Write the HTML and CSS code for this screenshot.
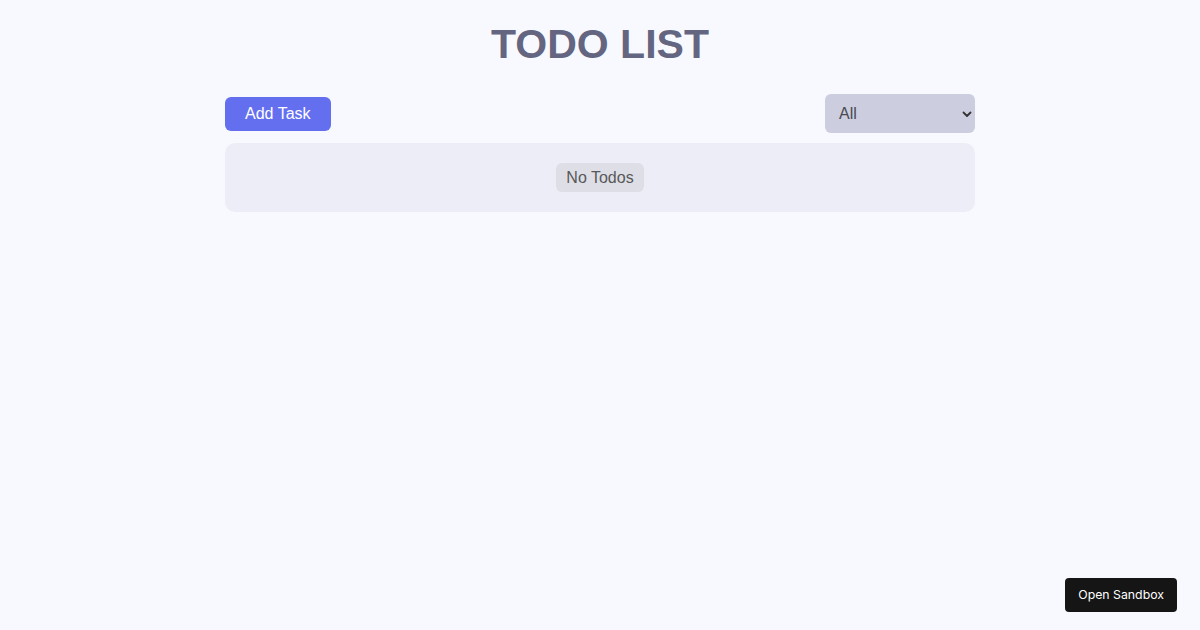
FILE: index.html
```html
<!DOCTYPE html>
<html>
<head>
<meta charset="utf-8">
<link rel="stylesheet" href="styles.css">
</head>
<body>
<div class="app">
  <h1 class="title">TODO LIST</h1>
  <div class="toolbar">
    <button class="add-btn">Add Task</button>
    <div class="select-wrap">
      <span class="select-value">All</span>
      <svg class="chevron" width="10" height="7" viewBox="0 0 10 7"><path d="M1.5 1.5 L5 5 L8.5 1.5" fill="none" stroke="#333" stroke-width="1.8" stroke-linecap="round" stroke-linejoin="round"/></svg>
    </div>
  </div>
  <div class="list">
    <span class="empty">No Todos</span>
  </div>
</div>
<a class="sandbox-btn">Open Sandbox</a>
</body>
</html>
```
FILE: styles.css
```css
* { box-sizing: border-box; }
html, body { margin: 0; padding: 0; }
body {
  background: #f8f9fe;
  font-family: "Liberation Sans", Arial, sans-serif;
  width: 1200px;
  height: 630px;
  position: relative;
}
.app {
  width: 750px;
  margin: 0 auto;
  padding-top: 19px;
}
.title {
  margin: 0;
  text-align: center;
  font-size: 41px;
  line-height: 50px;
  font-weight: 700;
  color: #646681;
}
.toolbar {
  display: flex;
  justify-content: space-between;
  align-items: center;
  margin-top: 25px;
}
.add-btn {
  background: #646ff0;
  color: #fff;
  border: none;
  border-radius: 6px;
  font-family: "Liberation Sans", Arial, sans-serif;
  font-size: 16px;
  height: 34px;
  padding: 0 20px;
  margin-top: 1px;
}
.select-wrap {
  width: 150px;
  height: 39px;
  background: #cccdde;
  border-radius: 6px;
  display: flex;
  align-items: center;
  justify-content: space-between;
  padding: 0 3px 0 14px;
  color: #585858;
  font-size: 16px;
}
.select-value { color: #4a4a52; }
.chevron { margin-top: 1px; }
.list {
  margin-top: 10px;
  background: #ecedf6;
  border-radius: 10px;
  height: 69px;
  display: flex;
  align-items: center;
  justify-content: center;
}
.empty {
  background: #dedfe6;
  color: #585858;
  font-size: 16px;
  border-radius: 6px;
  height: 29px;
  line-height: 29px;
  padding: 0 10px;
}
.sandbox-btn {
  position: absolute;
  right: 23px;
  bottom: 18px;
  background: #151515;
  color: #fff;
  font-family: Inter, "Liberation Sans", sans-serif;
  font-size: 12.3px;
  height: 34px;
  line-height: 34px;
  padding: 0 13px;
  border-radius: 4px;
}
```
